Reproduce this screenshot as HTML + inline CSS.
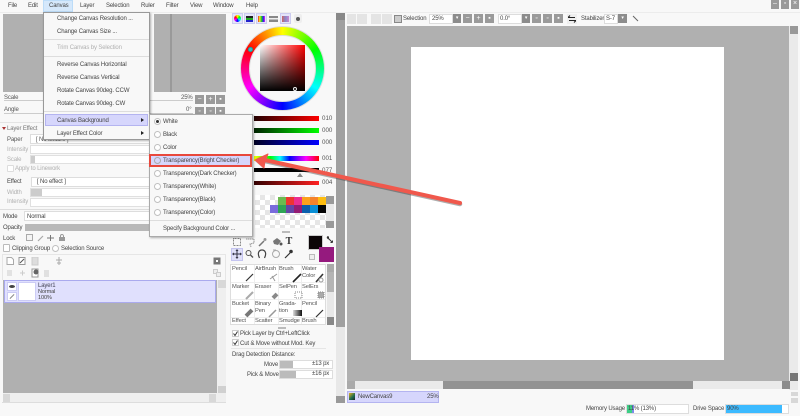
<!DOCTYPE html>
<html><head><meta charset="utf-8">
<style>
html,body{margin:0;padding:0}
body{width:800px;height:416px;overflow:hidden;position:relative;background:#f8f8f8;font-family:"Liberation Sans",sans-serif;font-size:6px;letter-spacing:-.14px;color:#555;filter:blur(.3px)}
.a,.t,.b{position:absolute}
.t{white-space:nowrap;line-height:8px;margin-top:1px}
.g{background:#b0b0b0}
.b{background:#9a9a9a;width:9px;height:9px;color:#fff;text-align:center;font-size:7px;line-height:9px;letter-spacing:0}
.m{color:#444}
.d{color:#b0b0b0}
.r{position:absolute;width:7px;height:7px;box-sizing:border-box;border-radius:50%;border:1px solid #c0c0c0;background:#fff}
.ic{position:absolute;width:7px;height:7px;border:1px solid #aaa;background:#f4f4f4;box-sizing:border-box}
.in{position:absolute;background:#fff;border:1px solid #e0e0e0;box-sizing:border-box}
.sl{position:absolute;left:254px;width:65px;height:5px}
.v{position:absolute;left:322px;color:#555;line-height:8px;white-space:nowrap;font-size:6.2px;letter-spacing:0;margin-top:1px}
.sw{position:absolute;width:8px;height:8px}
.cell{position:absolute;color:#555;line-height:7px;white-space:nowrap;font-size:5.8px;margin-top:1px}
.tb{position:absolute;background:#e4e4e4;width:10px;height:10px}
.dd{position:absolute;background:#8c8c8c;width:8px;height:9px;top:14px;color:#fff;font-size:5px;line-height:9px;text-align:center}
</style></head><body>

<!-- menu bar -->
<div class="a" style="left:43px;top:0;width:30px;height:12px;background:#d5e8fb;border:1px solid #bcdcf8;box-sizing:border-box"></div>
<div class="t m" style="left:8px;top:1px">File</div>
<div class="t m" style="left:28px;top:1px">Edit</div>
<div class="t m" style="left:49px;top:1px">Canvas</div>
<div class="t m" style="left:80px;top:1px">Layer</div>
<div class="t m" style="left:106px;top:1px">Selection</div>
<div class="t m" style="left:141px;top:1px">Ruler</div>
<div class="t m" style="left:166px;top:1px">Filter</div>
<div class="t m" style="left:190px;top:1px">View</div>
<div class="t m" style="left:213px;top:1px">Window</div>
<div class="t m" style="left:246px;top:1px">Help</div>
<div class="b" style="left:771px;top:0;width:8px;height:9px;line-height:8px">–</div>
<div class="b" style="left:781px;top:0;width:8px;height:9px;line-height:8px">▫</div>
<div class="b" style="left:791px;top:0;width:8px;height:9px;line-height:8px">×</div>
<div class="a" style="left:0;top:12px;width:800px;height:1px;background:#ececec"></div>

<!-- navigator -->
<div class="a g" style="left:3px;top:14px;width:147px;height:78px"></div>
<div class="a g" style="left:154px;top:14px;width:72px;height:78px"></div>
<div class="a" style="left:170px;top:14px;width:2px;height:78px;background:#999"></div>
<div class="t" style="left:4px;top:93px">Scale</div>
<div class="a" style="left:4px;top:100px;width:189px;height:1px;background:#ccc"></div>
<div class="t" style="left:181px;top:93px">25%</div>
<div class="b" style="left:195px;top:95px">−</div>
<div class="b" style="left:206px;top:95px">+</div>
<div class="b" style="left:216px;top:95px">▪</div>
<div class="t" style="left:4px;top:105px">Angle</div>
<div class="a" style="left:4px;top:113px;width:189px;height:1px;background:#ccc"></div>
<div class="t" style="left:186px;top:105px">0°</div>
<div class="b" style="left:195px;top:107px">◦</div>
<div class="b" style="left:206px;top:107px">◦</div>
<div class="b" style="left:216px;top:107px">▪</div>
<div class="a" style="left:0;top:122px;width:226px;height:1px;background:#e4e4e4"></div>

<!-- layer effect -->
<div class="a" style="left:2px;top:127px;border-top:3px solid #a33;border-left:2px solid transparent;border-right:2px solid transparent"></div>
<div class="t" style="left:7px;top:124px;color:#777">Layer Effect</div>
<div class="t" style="left:7px;top:135px">Paper</div>
<div class="in" style="left:30px;top:134px;width:195px;height:10px;border-color:#ddd"></div>
<div class="t" style="left:36px;top:135px">[ No texture ]</div>
<div class="t d" style="left:7px;top:145px">Intensity</div>
<div class="in" style="left:30px;top:145px;width:195px;height:9px"></div>
<div class="t d" style="left:7px;top:155px">Scale</div>
<div class="in" style="left:30px;top:155px;width:195px;height:9px"></div>
<div class="a" style="left:31px;top:156px;width:4px;height:7px;background:#ccc"></div>
<div class="a" style="left:7px;top:165px;width:7px;height:7px;box-sizing:border-box;border:1px solid #ddd;background:#fff;border-radius:1px"></div>
<div class="t d" style="left:15px;top:164px">Apply to Linework</div>
<div class="t" style="left:7px;top:177px;color:#444">Effect</div>
<div class="in" style="left:31px;top:177px;width:194px;height:10px;border-color:#ddd"></div>
<div class="t m" style="left:37px;top:177px">[ No effect ]</div>
<div class="t d" style="left:7px;top:188px">Width</div>
<div class="in" style="left:30px;top:188px;width:195px;height:9px"></div>
<div class="a" style="left:31px;top:189px;width:11px;height:7px;background:#ccc"></div>
<div class="t d" style="left:7px;top:197px">Intensity</div>
<div class="in" style="left:30px;top:198px;width:195px;height:9px"></div>
<div class="a" style="left:0;top:209px;width:226px;height:1px;background:#ddd"></div>

<div class="in" style="left:24px;top:211px;width:202px;height:10px;border-color:#ddd"></div>
<div class="t m" style="left:3px;top:212px">Mode</div>
<div class="t m" style="left:27px;top:212px">Normal</div>
<div class="t m" style="left:3px;top:223px">Opacity</div>
<div class="a" style="left:25px;top:224px;width:201px;height:7px;background:#b8b8b8"></div>
<div class="t m" style="left:3px;top:234px">Lock</div>
<div class="ic" style="left:26px;top:234px"></div>
<svg class="a" style="left:37px;top:234px" width="30" height="8" viewBox="0 0 30 8"><path d="M1 7 L6 2" stroke="#aaa" stroke-width="1.200"/><path d="M10 4H17M13.500 1V7" stroke="#777" stroke-width="1"/><rect x="22" y="3" width="6" height="4" fill="#999"/><path d="M23.500 3V2a1.500 1.500 0 0 1 3 0v1" stroke="#999" fill="none"/></svg>
<div class="a" style="left:3px;top:244px;width:7px;height:8px;box-sizing:border-box;border:1px solid #bbb;background:#fff;border-radius:1px"></div>
<div class="t m" style="left:12px;top:244px">Clipping Group</div>
<div class="r" style="left:52px;top:245px"></div>
<div class="t m" style="left:61px;top:244px">Selection Source</div>

<!-- layer panel -->
<div class="a" style="left:2px;top:254px;width:224px;height:26px;border:1px solid #e6e6e6;border-bottom:0;box-sizing:border-box"></div>
<svg class="a" style="left:5px;top:257px" width="218" height="21" viewBox="0 0 218 21">
<path d="M2 .5H6.500L8.500 2.500V7.500H2Z" fill="#fff" stroke="#aaa"/>
<path d="M14 .5H20V7.500H14Z" fill="#fff" stroke="#999"/><path d="M15 6L19 2" stroke="#555"/>
<rect x="27" y="0" width="6" height="8" fill="#ddd" stroke="#ccc"/>
<path d="M54 0V3M51 3H57M52 6H56M54 3V8" stroke="#aaa"/>
<rect x="208.500" y=".5" width="7" height="7" fill="#777"/><rect x="211" y="3" width="2" height="2" fill="#fff"/>
<rect x="2" y="13" width="5" height="6" fill="#e2e2e2"/>
<path d="M15 16H20M17.500 13.500V18.500" stroke="#ccc"/>
<rect x="27" y="12" width="6" height="8" fill="#fff" stroke="#999"/><circle cx="31" cy="15" r="2.500" fill="#666"/>
<rect x="39" y="13" width="5" height="7" fill="#e0e0e0"/>
<rect x="208.500" y="12.500" width="4" height="4" fill="#eee" stroke="#ccc"/><rect x="211.500" y="15.500" width="4" height="4" fill="#eee" stroke="#ccc"/>
</svg>

<div class="a g" style="left:3px;top:280px;width:214px;height:113px"></div>
<div class="a" style="left:4px;top:280px;width:212px;height:23px;background:#e0e0fd;border:1px solid #aaaaee;box-sizing:border-box"></div>
<div class="a" style="left:7px;top:282px;width:10px;height:9px;background:#fff;border:1px solid #ccccf5;box-sizing:border-box"></div>
<div class="a" style="left:9px;top:285px;width:6px;height:3px;background:#444;border-radius:50%"></div>
<div class="a" style="left:7px;top:292px;width:10px;height:9px;background:#fff;border:1px solid #ccccf5;box-sizing:border-box"></div>
<div class="a" style="left:9px;top:296px;width:6px;height:1px;background:#888;transform:rotate(-45deg)"></div>
<div class="a" style="left:18px;top:282px;width:18px;height:19px;background:#fff;border:1px solid #ccccf5;box-sizing:border-box"></div>
<div class="t m" style="left:38px;top:281px;color:#445">Layer1</div>
<div class="t m" style="left:38px;top:287px;font-size:5.600px">Normal</div>
<div class="t m" style="left:38px;top:293px;font-size:5.600px">100%</div>
<div class="a" style="left:217px;top:280px;width:9px;height:113px;background:#efefef"></div>
<div class="a" style="left:218px;top:280px;width:8px;height:8px;background:#d8d8d8"></div>
<div class="a" style="left:218px;top:386px;width:8px;height:7px;background:#d0d0d0"></div>
<div class="a" style="left:3px;top:393px;width:223px;height:9px;background:#efefef"></div>
<div class="a" style="left:3px;top:394px;width:7px;height:8px;background:#d8d8d8"></div>
<div class="a" style="left:209px;top:394px;width:7px;height:8px;background:#d8d8d8"></div>
<div class="a" style="left:2px;top:402px;width:224px;height:1px;background:#ddd"></div>

<!-- color panel tabs -->
<div class="a" style="left:232px;top:13px;width:11px;height:11px;background:#e4e4fa;border:1px solid #ccccf0;box-sizing:border-box"></div>
<div class="a" style="left:234px;top:15px;width:7px;height:7px;border-radius:50%;background:conic-gradient(#ff0,#0f0,#0ff,#00f,#f0f,red,#ff0)"></div>
<div class="a" style="left:244px;top:13px;width:11px;height:11px;background:#e4e4fa;border:1px solid #ccccf0;box-sizing:border-box"></div>
<div class="a" style="left:246px;top:16px;width:7px;height:6px;background:linear-gradient(#222 33%,#2a2 33%,#2a2 66%,#22c 66%)"></div>
<div class="a" style="left:256px;top:13px;width:11px;height:11px;background:#e4e4fa;border:1px solid #ccccf0;box-sizing:border-box"></div>
<div class="a" style="left:258px;top:16px;width:7px;height:6px;background:linear-gradient(90deg,#e22,#ee2,#2c2,#22e,#e2e)"></div>
<div class="a" style="left:269px;top:16px;width:9px;height:6px;background:linear-gradient(#888 30%,#eee 30%,#eee 60%,#888 60%)"></div>
<div class="a" style="left:280px;top:13px;width:11px;height:11px;background:#e4e4fa;border:1px solid #ccccf0;box-sizing:border-box"></div>
<div class="a" style="left:282px;top:16px;width:7px;height:6px;background:linear-gradient(90deg,#c66,#88c,#c8c)"></div>
<div class="a" style="left:294px;top:14px;width:8px;height:9px;background:#eee;border-radius:2px"></div>
<div class="a" style="left:296px;top:17px;width:4px;height:4px;background:#555;border-radius:50%"></div>

<!-- wheel -->
<div class="a" style="left:240px;top:26px;width:85px;height:85px;border-radius:50%;background:#ddd"></div>
<div class="a" style="left:241px;top:27px;width:83px;height:83px;border-radius:50%;background:conic-gradient(#ff0 0deg,#0f0 60deg,#0ff 120deg,#00f 180deg,#f0f 240deg,red 300deg,#ff0 360deg)"></div>
<div class="a" style="left:249px;top:35px;width:67px;height:67px;border-radius:50%;background:#f8f8f8;border:1px solid #ddd;box-sizing:border-box"></div>
<div class="a" style="left:260px;top:45px;width:45px;height:46px;background:linear-gradient(to bottom,rgba(0,0,0,0),#000),linear-gradient(to right,#fff,#f00)"></div>
<div class="a" style="left:293px;top:87px;width:4px;height:4px;box-sizing:border-box;border:1px solid #eee;border-radius:50%"></div>
<div class="a" style="left:248px;top:47px;width:5px;height:5px;box-sizing:border-box;border:1px solid #1aa;border-radius:50%;background:#4bb"></div>

<!-- sliders -->
<div class="sl" style="top:116px;background:linear-gradient(90deg,#200,#f00)"></div>
<div class="v" style="top:114px">010</div>
<div class="sl" style="top:128px;background:linear-gradient(90deg,#020,#0f0)"></div>
<div class="v" style="top:126px">000</div>
<div class="sl" style="top:140px;background:linear-gradient(90deg,#002,#00f)"></div>
<div class="v" style="top:138px">000</div>
<div class="sl" style="top:156px;background:linear-gradient(90deg,#ff0 0,#0f0 25%,#0ff 40%,#00f 55%,#f0f 80%,#f00)"></div>
<div class="v" style="top:154px">001</div>
<div class="sl" style="top:168px;height:4px;background:#000"></div>
<div class="v" style="top:166px">077</div>
<div class="a" style="left:297px;top:173px;width:0;height:0;border-left:3px solid transparent;border-right:3px solid transparent;border-bottom:4px solid #888"></div>
<div class="sl" style="top:181px;height:4px;background:linear-gradient(90deg,#300,#f22)"></div>
<div class="v" style="top:178px">004</div>

<!-- swatches -->
<div class="a" style="left:255px;top:195px;width:71px;height:33px;background-color:#fff;background-image:conic-gradient(#e6e6e6 25%,#fff 25%,#fff 50%,#e6e6e6 50%,#e6e6e6 75%,#fff 75%);background-size:10px 10px"></div>
<div class="sw" style="left:278px;top:197px;background:#6cba50"></div>
<div class="sw" style="left:286px;top:197px;background:#ee3530"></div>
<div class="sw" style="left:294px;top:197px;background:#ea2f92"></div>
<div class="sw" style="left:302px;top:197px;background:#fba11c"></div>
<div class="sw" style="left:310px;top:197px;background:#f5832b"></div>
<div class="sw" style="left:318px;top:197px;background:#fdbd10"></div>
<div class="sw" style="left:270px;top:205px;background:#7a6cdc"></div>
<div class="sw" style="left:278px;top:205px;background:#2fa556"></div>
<div class="sw" style="left:286px;top:205px;background:#6546a6"></div>
<div class="sw" style="left:294px;top:205px;background:#941c74"></div>
<div class="sw" style="left:302px;top:205px;background:#0b5fad"></div>
<div class="sw" style="left:310px;top:205px;background:#0a8fd5"></div>
<div class="sw" style="left:318px;top:205px;background:#050505"></div>
<div class="a" style="left:326px;top:196px;width:8px;height:32px;background:#e8e8e8"></div>
<div class="a" style="left:326px;top:196px;width:8px;height:8px;background:#999"></div>
<div class="a" style="left:326px;top:221px;width:8px;height:7px;background:#999"></div>
<div class="a" style="left:282px;top:231px;width:8px;height:2px;background:#bbb"></div>

<!-- tools -->
<div class="a" style="left:231px;top:248px;width:12px;height:13px;background:#dfdff8;border:1px solid #c4c4f0;box-sizing:border-box"></div>
<svg class="a" style="left:230px;top:236px" width="66" height="26" viewBox="0 0 66 26">
<rect x="3.500" y="2.500" width="7" height="7" fill="none" stroke="#888" stroke-dasharray="1 .5"/>
<path d="M16 3H24V7L20 8L21 11" fill="none" stroke="#999" stroke-dasharray="1.500 .5"/>
<path d="M29 10L34 5" stroke="#777" stroke-width="1.500"/><circle cx="35" cy="3.500" r="1.500" fill="#999"/>
<path d="M43 5L47 2L51 5L48 9L44 8Z" fill="#777"/><circle cx="51" cy="8" r="1.500" fill="#555"/>
<path d="M3 18H11M7 14V22" stroke="#334" stroke-width="1"/><path d="M7 13L5.500 15H8.500ZM7 23L5.500 21H8.500ZM2 18L4 16.500V19.500ZM12 18L10 16.500V19.500Z" fill="#334"/>
<circle cx="18.500" cy="17" r="2.500" fill="none" stroke="#555"/><path d="M20.500 19L23 21.500" stroke="#555" stroke-width="1.400"/>
<path d="M29.500 22C27 17 29 14 32 14S37 17 34.500 22" fill="none" stroke="#444" stroke-width="1.200"/>
<circle cx="46" cy="18" r="3.500" fill="none" stroke="#aaa"/><path d="M43 14H46" stroke="#aaa"/>
<path d="M55 22L60 17" stroke="#333" stroke-width="1.200"/><circle cx="61" cy="15.500" r="1.800" fill="#333"/>
</svg>
<div class="a" style="left:283px;top:236px;width:12px;height:12px;color:#333;font:bold 10px/12px 'Liberation Serif',serif;text-align:center;letter-spacing:0">T</div>
<div class="a" style="left:308px;top:235px;width:15px;height:15px;background:#0c0608;border:1px solid #ccc;box-sizing:border-box"></div>
<div class="a" style="left:319px;top:247px;width:15px;height:15px;background:#951a7e"></div>
<svg class="a" style="left:326px;top:236px" width="8" height="8" viewBox="0 0 8 8"><path d="M1 1.500H3M1 1.500L2.500 0M1 1.500L2.500 3M2 2L6 6" fill="none" stroke="#333"/><path d="M6.500 6.500L4.500 6.500M6.500 6.500V4.500" stroke="#333"/></svg>
<div class="a" style="left:309px;top:254px;width:6px;height:6px;border:1px solid #bbb;box-sizing:border-box;background:#eee"></div>

<!-- brushes -->
<div class="a" style="left:230px;top:264px;width:96px;height:61px;background:#fff;border:1px solid #ddd;box-sizing:border-box;overflow:hidden"></div>
<div class="a" style="left:254px;top:265px;width:1px;height:59px;background:#eee"></div>
<div class="a" style="left:278px;top:265px;width:1px;height:59px;background:#eee"></div>
<div class="a" style="left:301px;top:265px;width:1px;height:59px;background:#eee"></div>
<div class="a" style="left:231px;top:282px;width:94px;height:1px;background:#eee"></div>
<div class="a" style="left:231px;top:299px;width:94px;height:1px;background:#eee"></div>
<div class="a" style="left:231px;top:317px;width:94px;height:1px;background:#eee"></div>
<div class="cell" style="left:232px;top:265px">Pencil</div>
<div class="cell" style="left:255px;top:265px">AirBrush</div>
<div class="cell" style="left:279px;top:265px">Brush</div>
<div class="cell" style="left:302px;top:265px">Water<br>Color</div>
<div class="cell" style="left:232px;top:283px">Marker</div>
<div class="cell" style="left:255px;top:283px">Eraser</div>
<div class="cell" style="left:279px;top:283px">SelPen</div>
<div class="cell" style="left:302px;top:283px">SelErs</div>
<div class="cell" style="left:232px;top:300px">Bucket</div>
<div class="cell" style="left:255px;top:300px">Binary<br>Pen</div>
<div class="cell" style="left:279px;top:300px">Grada-<br>tion</div>
<div class="cell" style="left:302px;top:300px">Pencil</div>
<div class="cell" style="left:232px;top:317px">Effect</div>
<div class="cell" style="left:255px;top:317px">Scatter</div>
<div class="cell" style="left:279px;top:317px">Smudge</div>
<div class="cell" style="left:302px;top:317px">Brush</div>
<svg class="a" style="left:230px;top:264px" width="96" height="60" viewBox="0 0 96 60">
<path d="M16 17L23 10" stroke="#333" stroke-width="1.200"/>
<path d="M40 15L47 10M42 12L45 17" stroke="#999" stroke-width="1"/>
<path d="M63 18L71 10" stroke="#222" stroke-width="1.600"/>
<path d="M86 18L93 10" stroke="#333" stroke-width="1.600"/><circle cx="91" cy="16" r="2" fill="none" stroke="#999"/>
<path d="M16 35L23 28" stroke="#aaa" stroke-width="2"/>
<path d="M43 34L47 30" stroke="#888" stroke-width="4"/>
<path d="M65 28H72V34H65Z" fill="none" stroke="#888" stroke-dasharray="1 1"/>
<path d="M88 28H94V34H88Z" fill="#aaa" stroke="#888" stroke-dasharray="1 1"/>
<path d="M16 52L22 46" stroke="#777" stroke-width="4"/>
<path d="M39 53L46 46" stroke="#999" stroke-width="1.500"/>
<rect x="63" y="46" width="9" height="6" fill="url(#gr)"/>
<path d="M86 53L93 46" stroke="#333" stroke-width="1.200"/>
<defs><linearGradient id="gr"><stop offset="0" stop-color="#ddd"/><stop offset="1" stop-color="#111"/></linearGradient></defs>
</svg>
<div class="a" style="left:327px;top:264px;width:7px;height:61px;background:#e8e8e8"></div>
<div class="a" style="left:327px;top:264px;width:7px;height:8px;background:#aaa"></div>
<div class="a" style="left:327px;top:272px;width:7px;height:20px;background:#b4b4b4"></div>
<div class="a" style="left:327px;top:317px;width:7px;height:8px;background:#888"></div>

<div class="a" style="left:278px;top:327px;width:8px;height:2px;background:#bbb"></div>
<div class="a" style="left:232px;top:330px;width:7px;height:7px;background:#fff;border:1px solid #ccc;box-sizing:border-box"></div>
<div class="t m" style="left:240px;top:329px">Pick Layer by Ctrl+LeftClick</div>
<div class="a" style="left:232px;top:339px;width:7px;height:7px;background:#fff;border:1px solid #ccc;box-sizing:border-box"></div>
<div class="t m" style="left:240px;top:339px">Cut &amp; Move without Mod. Key</div>
<svg class="a" style="left:232px;top:330px" width="7" height="16" viewBox="0 0 7 16"><path d="M1.500 3.500L3 5.500L5.500 1.500M1.500 12.500L3 14.500L5.500 10.500" fill="none" stroke="#333"/></svg>
<div class="a" style="left:231px;top:348px;width:95px;height:1px;background:#e6e6e6"></div>
<div class="t m" style="left:232px;top:350px">Drag Detection Distance:</div>
<div class="t m" style="left:264px;top:360px">Move</div>
<div class="in" style="left:279px;top:360px;width:54px;height:9px;border-color:#ddd"></div>
<div class="a" style="left:280px;top:361px;width:13px;height:7px;background:#bbb"></div>
<div class="t m" style="left:312px;top:359px">±13 px</div>
<div class="t m" style="left:247px;top:370px">Pick &amp; Move</div>
<div class="in" style="left:279px;top:370px;width:54px;height:9px;border-color:#ddd"></div>
<div class="a" style="left:280px;top:371px;width:16px;height:7px;background:#bbb"></div>
<div class="t m" style="left:312px;top:369px">±16 px</div>

<!-- panel scrollbar -->
<div class="a" style="left:336px;top:13px;width:9px;height:390px;background:#e8e8e8"></div>
<div class="a" style="left:336px;top:13px;width:9px;height:7px;background:#888"></div>
<div class="a" style="left:336px;top:20px;width:9px;height:307px;background:#a0a0a0"></div>
<div class="a" style="left:336px;top:396px;width:9px;height:7px;background:#999"></div>

<!-- top toolbar -->
<div class="tb" style="left:347px;top:14px;width:9px"></div>
<div class="tb" style="left:357px;top:14px"></div>
<div class="tb" style="left:371px;top:14px"></div>
<div class="tb" style="left:382px;top:14px"></div>
<div class="a" style="left:394px;top:15px;width:8px;height:8px;background:#ccc;border:1px solid #888;box-sizing:border-box"></div>
<div class="t m" style="left:403px;top:14px">Selection</div>
<div class="in" style="left:429px;top:14px;width:24px;height:10px;border-color:#ddd"></div>
<div class="t m" style="left:432px;top:14px">25%</div>
<div class="dd" style="left:453px">▾</div>
<div class="b" style="left:463px;top:14px;line-height:9px">−</div>
<div class="b" style="left:474px;top:14px;line-height:9px">+</div>
<div class="b" style="left:485px;top:14px;line-height:9px">▪</div>
<div class="in" style="left:498px;top:14px;width:24px;height:10px;border-color:#ddd"></div>
<div class="t m" style="left:500px;top:14px">0.0°</div>
<div class="dd" style="left:522px">▾</div>
<div class="b" style="left:532px;top:14px;line-height:9px">◦</div>
<div class="b" style="left:543px;top:14px;line-height:9px">◦</div>
<div class="b" style="left:554px;top:14px;line-height:9px">▪</div>
<div class="a" style="left:567px;top:14px;width:10px;height:10px;background:#eee"></div>
<svg class="a" style="left:568px;top:15px" width="8" height="8" viewBox="0 0 8 8"><path d="M0 2.500H7M0 2.500L2 .5M1 5.500H8M8 5.500L6 7.500" fill="none" stroke="#222"/></svg>
<div class="t m" style="left:581px;top:14px">Stabilizer</div>
<div class="in" style="left:604px;top:14px;width:14px;height:10px;border-color:#ddd"></div>
<div class="t m" style="left:606px;top:14px">S-7</div>
<div class="dd" style="left:618px;width:9px">▾</div>
<div class="a" style="left:632px;top:18px;width:7px;height:1px;background:#666;transform:rotate(45deg)"></div>

<!-- canvas -->
<div class="a g" style="left:347px;top:26px;width:442px;height:355px"></div>
<div class="a" style="left:411px;top:47px;width:313px;height:313px;background:#fff"></div>
<div class="a" style="left:789px;top:26px;width:9px;height:364px;background:#eaeaea"></div>
<div class="a" style="left:790px;top:26px;width:8px;height:8px;background:#999"></div>
<div class="a" style="left:790px;top:373px;width:8px;height:8px;background:#777"></div>
<div class="a" style="left:347px;top:381px;width:443px;height:8px;background:#eaeaea"></div>
<div class="a" style="left:347px;top:381px;width:8px;height:8px;background:#aaa"></div>
<div class="a" style="left:443px;top:381px;width:250px;height:8px;background:#939393"></div>
<div class="a" style="left:782px;top:381px;width:8px;height:8px;background:#8c8c8c"></div>

<!-- tab + status -->
<div class="a" style="left:347px;top:391px;width:92px;height:12px;background:#d6d6fc;border:1px solid #b4b4f0;box-sizing:border-box"></div>
<div class="a" style="left:349px;top:393px;width:6px;height:7px;background:linear-gradient(135deg,#e8b020,#1a6a50 60%,#222)"></div>
<div class="t m" style="left:358px;top:392px">NewCanvas9</div>
<div class="t m" style="left:427px;top:392px">25%</div>
<div class="a" style="left:791px;top:392px;width:7px;height:4px;background:#d8d8d8"></div>
<div class="a" style="left:791px;top:398px;width:7px;height:5px;background:#d8d8d8"></div>
<div class="t m" style="left:586px;top:404px">Memory Usage</div>
<div class="in" style="left:626px;top:404px;width:63px;height:10px;border-color:#ddd"></div>
<div class="a" style="left:627px;top:405px;width:5px;height:8px;background:#3ccf86"></div>
<div class="a" style="left:632px;top:405px;width:2px;height:8px;background:#7c8ce8"></div>
<div class="t m" style="left:628px;top:404px">11% (13%)</div>
<div class="t m" style="left:693px;top:404px">Drive Space</div>
<div class="in" style="left:725px;top:404px;width:64px;height:10px;border-color:#ddd"></div>
<div class="a" style="left:726px;top:405px;width:56px;height:8px;background:#3cbaff"></div>
<div class="t m" style="left:727px;top:404px">90%</div>

<!-- canvas menu -->
<div class="a" style="left:43px;top:12px;width:107px;height:128px;background:#f8f8f8;border:1px solid #999;box-sizing:border-box;box-shadow:1px 1px 2px rgba(0,0,0,.3)"></div>
<div class="t m" style="left:57px;top:14px">Change Canvas Resolution ...</div>
<div class="t m" style="left:57px;top:27px">Change Canvas Size ...</div>
<div class="a" style="left:44px;top:39px;width:105px;height:1px;background:#ddd"></div>
<div class="t d" style="left:57px;top:43px">Trim Canvas by Selection</div>
<div class="a" style="left:44px;top:56px;width:105px;height:1px;background:#ddd"></div>
<div class="t m" style="left:57px;top:60px">Reverse Canvas Horizontal</div>
<div class="t m" style="left:57px;top:73px">Reverse Canvas Vertical</div>
<div class="t m" style="left:57px;top:86px">Rotate Canvas 90deg. CCW</div>
<div class="t m" style="left:57px;top:99px">Rotate Canvas 90deg. CW</div>
<div class="a" style="left:44px;top:111px;width:105px;height:1px;background:#ddd"></div>
<div class="a" style="left:45px;top:114px;width:103px;height:12px;background:#d6d6fc;border:1px solid #b4b4f0;box-sizing:border-box"></div>
<div class="t m" style="left:57px;top:116px">Canvas Background</div>
<div class="a" style="left:141px;top:118px;border-left:3px solid #222;border-top:2px solid transparent;border-bottom:2px solid transparent"></div>
<div class="t m" style="left:57px;top:129px">Layer Effect Color</div>
<div class="a" style="left:141px;top:131px;border-left:3px solid #222;border-top:2px solid transparent;border-bottom:2px solid transparent"></div>

<!-- submenu -->
<div class="a" style="left:149px;top:114px;width:104px;height:123px;background:#f8f8f8;border:1px solid #aaa;box-sizing:border-box;box-shadow:1px 1px 2px rgba(0,0,0,.3)"></div>
<div class="r" style="left:154px;top:118px"></div>
<div class="a" style="left:156px;top:120px;width:3px;height:3px;background:#333;border-radius:50%"></div>
<div class="t m" style="left:163px;top:117px">White</div>
<div class="r" style="left:154px;top:131px"></div>
<div class="t m" style="left:163px;top:130px">Black</div>
<div class="r" style="left:154px;top:144px"></div>
<div class="t m" style="left:163px;top:143px">Color</div>
<div class="a" style="left:149px;top:154px;width:103px;height:13px;background:#d6d6fc;border:2px solid #e8483c;box-sizing:border-box"></div>
<div class="r" style="left:154px;top:157px;background:#d6d6fc;border-color:#aaa"></div>
<div class="t m" style="left:163px;top:156px">Transparency(Bright Checker)</div>
<div class="r" style="left:154px;top:170px"></div>
<div class="t m" style="left:163px;top:169px">Transparency(Dark Checker)</div>
<div class="r" style="left:154px;top:183px"></div>
<div class="t m" style="left:163px;top:182px">Transparency(White)</div>
<div class="r" style="left:154px;top:196px"></div>
<div class="t m" style="left:163px;top:195px">Transparency(Black)</div>
<div class="r" style="left:154px;top:209px"></div>
<div class="t m" style="left:163px;top:208px">Transparency(Color)</div>
<div class="a" style="left:150px;top:220px;width:102px;height:1px;background:#ddd"></div>
<div class="t m" style="left:163px;top:224px">Specify Background Color ...</div>

<!-- arrow -->
<svg class="a" style="left:0;top:0" width="800" height="416" viewBox="0 0 800 416">
<path d="M460 204 L265 161" stroke="#333" stroke-opacity=".4" stroke-width="4.500" stroke-linecap="round" fill="none"/>
<path d="M255 161 L268 155 L265 162 L264 169 Z" fill="#333" fill-opacity=".35" stroke-linejoin="round"/>
<path d="M460 203 L265 160" stroke="#f0584c" stroke-width="4" stroke-linecap="round" fill="none"/>
<path d="M255 160 L268 154 L265 161 L264 168 Z" fill="#f0584c" stroke="#f0584c" stroke-width="1" stroke-linejoin="round"/>
</svg>
</body></html>
